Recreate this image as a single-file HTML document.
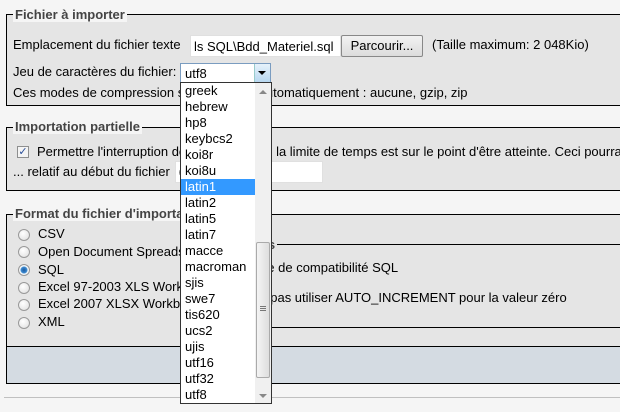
<!DOCTYPE html>
<html><head><meta charset="utf-8"><style>
*{margin:0;padding:0;box-sizing:border-box}
body{width:620px;height:412px;background:#f5f5f5;font-family:"Liberation Sans",Arial,sans-serif;font-size:13px;color:#000;position:relative;overflow:hidden}
.a{position:absolute;white-space:nowrap}
.fs{position:absolute;background:#e5e5e5;border:1px solid #000;border-right:none}
.lg{position:absolute;background:#f5f5f5;font-weight:bold;color:#444;font-size:13px;padding:0 2px;line-height:14px}
.inp{position:absolute;background:#fff;border:1px solid #e0e0e0}
.rad{position:absolute;width:12px;height:12px;border-radius:50%;border:1px solid #999;background:radial-gradient(circle at 40% 35%,#fff,#ddd)}
.dd{position:absolute;left:180px;top:82px;width:92px;height:322px;background:#fff;border:1px solid #333}
.dd div{height:16px;line-height:16px;padding-left:4px;font-size:13px}
</style></head><body>
<div class="fs" style="left:6px;top:14px;width:620px;height:92px"></div>
<div class="lg" style="left:13px;top:8px">Fichier à importer</div>
<div class="a" style="left:13px;top:37px">Emplacement du fichier texte</div>
<div class="inp" style="left:190px;top:35px;width:151px;height:22px;padding:3px 0 0 3px">ls SQL\Bdd_Materiel.sql</div>
<div class="a" style="left:341px;top:35px;width:82px;height:22px;border:1px solid #888;border-radius:2px;background:linear-gradient(#f2f2f2,#dcdcdc);text-align:center;line-height:20px">Parcourir...</div>
<div class="a" style="left:432px;top:37px">(Taille maximum: 2 048Kio)</div>
<div class="a" style="left:13px;top:64px">Jeu de caractères du fichier:</div>
<div class="inp" style="left:180px;top:63px;width:91px;height:20px;border:1px solid #7a9cc0;padding:2px 0 0 4px">utf8</div>
<div class="a" style="left:254px;top:64px;width:16px;height:18px;background:linear-gradient(#e6f2fb,#b8d8f0);border-left:1px solid #9cc"></div>
<div class="a" style="left:258px;top:71px;border-left:4px solid transparent;border-right:4px solid transparent;border-top:4px solid #000"></div>
<div class="a" style="left:13px;top:85px">Ces modes de compression sont détectés automatiquement : aucune, gzip, zip</div>

<div class="fs" style="left:6px;top:127px;width:620px;height:64px"></div>
<div class="lg" style="left:13px;top:120px">Importation partielle</div>
<div class="a" style="left:17px;top:146px;width:12px;height:12px;border:1px solid #8e8f8f;background:#f4f4f4;color:#2a4f9a;font-size:11px;line-height:10px;text-align:center">✓</div>
<div class="a" style="left:37px;top:144px">Permettre l'interruption de l'importation si la limite de temps est sur le point d'être atteinte. Ceci pourra</div>
<div class="a" style="left:13px;top:164px">... relatif au début du fichier</div>
<div class="inp" style="left:175px;top:161px;width:148px;height:22px;padding:3px 0 0 3px">0</div>

<div class="fs" style="left:6px;top:214px;width:620px;height:170px"></div>
<div class="a" style="left:7px;top:346px;width:620px;height:37px;background:#d4dbe2;border-top:1px solid #000"></div>
<div class="lg" style="left:13px;top:207px">Format du fichier d'importation</div>
<div class="a" style="left:255px;top:244px;width:370px;height:84px;border:1px solid #000;border-right:none"></div>
<div class="lg" style="left:224px;top:238px;background:#e5e5e5">Options</div>
<div class="a" style="left:242px;top:260px">Mode de compatibilité SQL</div>
<div class="a" style="left:250px;top:290px">Ne pas utiliser AUTO_INCREMENT pour la valeur zéro</div>
<div class="rad" style="left:18px;top:229px"></div><div class="a" style="left:38px;top:226px">CSV</div>
<div class="rad" style="left:18px;top:246px"></div><div class="a" style="left:38px;top:244px">Open Document Spreadsheet</div>
<div class="rad" style="left:18px;top:264px;background:radial-gradient(circle,#1b5aa0 0,#3d8ad0 3px,#fff 4px,#ddd 6px)"></div><div class="a" style="left:38px;top:262px">SQL</div>
<div class="rad" style="left:18px;top:282px"></div><div class="a" style="left:38px;top:279px">Excel 97-2003 XLS Workbook</div>
<div class="rad" style="left:18px;top:299px"></div><div class="a" style="left:38px;top:296px">Excel 2007 XLSX Workbook</div>
<div class="rad" style="left:18px;top:317px"></div><div class="a" style="left:38px;top:314px">XML</div>
<div class="a" style="left:4px;top:397px;width:620px;height:1px;background:#c0c0c0"></div>

<div class="dd">
<div>greek</div><div>hebrew</div><div>hp8</div><div>keybcs2</div><div>koi8r</div><div>koi8u</div>
<div style="background:#3399ff;color:#fff;width:74px">latin1</div>
<div>latin2</div><div>latin5</div><div>latin7</div><div>macce</div><div>macroman</div><div>sjis</div><div>swe7</div><div>tis620</div><div>ucs2</div><div>ujis</div><div>utf16</div><div>utf32</div><div>utf8</div>
</div>
<div class="a" style="left:255px;top:83px;width:16px;height:320px;background:#f0f0f0"></div>
<div class="a" style="left:256px;top:242px;width:14px;height:136px;border:1px solid #aaa;border-radius:2px;background:linear-gradient(90deg,#f4f4f4,#dedede)"></div>
<div class="a" style="left:260px;top:306px;width:6px;height:5px;border-top:1px solid #777;border-bottom:1px solid #777"></div>
<div class="a" style="left:260px;top:308px;width:6px;height:1px;background:#777"></div>
<div class="a" style="left:259px;top:90px;border-left:4px solid transparent;border-right:4px solid transparent;border-bottom:4px solid #888"></div>
<div class="a" style="left:259px;top:394px;border-left:4px solid transparent;border-right:4px solid transparent;border-top:4px solid #888"></div>
</body></html>
